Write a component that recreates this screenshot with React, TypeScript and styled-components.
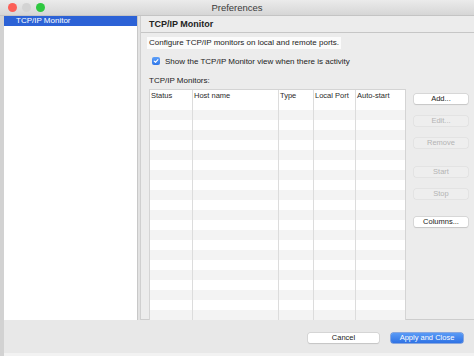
import React from "react";
import styled, { createGlobalStyle } from "styled-components";

const Global = createGlobalStyle`
  html, body { margin: 0; padding: 0; background: #e6e6e6; }
  body { font-family: "Liberation Sans", Arial, sans-serif; -webkit-font-smoothing: antialiased; }
  * { box-sizing: border-box; }
`;

const Window = styled.div`
  width: 474px;
  height: 356px;
  display: flex;
  flex-direction: column;
  background: #e8e8e8;
  overflow: hidden;
  color: #222;
`;

const TitleBar = styled.div`
  height: 16px;
  flex: none;
  display: flex;
  align-items: center;
  position: relative;
  background: linear-gradient(#ebebeb, #d6d6d6);
  border-bottom: 1px solid #c4c4c4;
`;

const Lights = styled.div`
  display: flex;
  gap: 5px;
  padding-left: 8px;
`;

const Light = styled.span<{ $c: string }>`
  width: 9px;
  height: 9px;
  border-radius: 50%;
  background: ${(p) => p.$c};
`;

const Title = styled.div`
  position: absolute;
  left: 0;
  right: 0;
  text-align: center;
  font-size: 9.5px;
  color: #3a3a3a;
  top: 2px;
`;

const Lower = styled.div`
  flex: 1;
  display: flex;
  flex-direction: column;
  border-left: 4px solid #d2d2d2;
`;

const Body = styled.div`
  height: 304px;
  display: flex;
  flex: none;
`;

const Sidebar = styled.div`
  width: 134px;
  background: #fff;
  border-right: 1px solid #c8c8c8;
  flex: none;
`;

const TreeItem = styled.div<{ $sel?: boolean }>`
  height: 10px;
  line-height: 10px;
  font-size: 8px;
  padding-left: 12px;
  color: ${(p) => (p.$sel ? "#fff" : "#222")};
  background: ${(p) => (p.$sel ? "#2c62d6" : "transparent")};
`;

const Gutter = styled.div`
  width: 3px;
  background: #e2e2e2;
  border-right: 1px solid #cfcfcf;
  flex: none;
`;

const Panel = styled.div`
  flex: 1;
  display: flex;
  flex-direction: column;
  background: #ececec;
  border-bottom: 1px solid #cdcdcd;
`;

const PanelHeader = styled.div`
  height: 17px;
  flex: none;
  display: flex;
  align-items: center;
  padding-left: 8px;
  font-size: 9px;
  font-weight: bold;
  color: #222;
  border-bottom: 1px solid #c6c6c6;
`;

const PanelBody = styled.div`
  flex: 1;
  display: flex;
  flex-direction: column;
  padding: 4px 7px 5px 6px;
`;

const Intro = styled.div`
  align-self: flex-start;
  height: 12px;
  line-height: 12px;
  padding: 0 2px;
  font-size: 8px;
  background: #fbfbfb;
`;

const CheckRow = styled.label`
  display: flex;
  align-items: center;
  gap: 5px;
  margin-top: 7px;
  padding-left: 5px;
  height: 10px;
  font-size: 8px;
`;

const Check = styled.span`
  width: 8px;
  height: 8px;
  border-radius: 2px;
  background: linear-gradient(#5ea0f8, #2f76e8);
  display: flex;
  align-items: center;
  justify-content: center;
`;

const SectionLabel = styled.div`
  margin-top: 10px;
  padding-left: 2px;
  height: 10px;
  line-height: 10px;
  font-size: 8px;
`;

const TableArea = styled.div`
  margin-top: 3px;
  flex: 1;
  display: flex;
  gap: 8px;
  padding-left: 2px;
`;

const Table = styled.div`
  width: 257px;
  display: grid;
  grid-template-columns: 43px 86px 35px 42px 1fr;
  grid-auto-rows: 10px;
  align-content: start;
  background: #fff;
  border: 1px solid #d4d4d4;
  overflow: hidden;
`;

const HeadCell = styled.div<{ $last?: boolean }>`
  height: 11px;
  line-height: 11px;
  font-size: 7.5px;
  padding-left: 1px;
  border-right: ${(p) => (p.$last ? "none" : "1px solid #dcdcdc")};
  border-bottom: 1px solid #dcdcdc;
  color: #2a2a2a;
`;

const Cell = styled.div<{ $alt: boolean; $last?: boolean }>`
  background: ${(p) => (p.$alt ? "#f3f3f3" : "#fff")};
  border-right: ${(p) => (p.$last ? "none" : "1px solid #dcdcdc")};
`;

const Buttons = styled.div`
  width: 54px;
  display: flex;
  flex-direction: column;
  padding-top: 5px;
`;

const Btn = styled.div<{ $disabled?: boolean; $gap: number }>`
  height: 10px;
  margin-top: ${(p) => p.$gap}px;
  font-size: 7.5px;
  line-height: 10px;
  text-align: center;
  border-radius: 2px;
  color: ${(p) => (p.$disabled ? "#b4b4b4" : "#222")};
  background: ${(p) => (p.$disabled ? "#eeeeee" : "#fff")};
  box-shadow: ${(p) =>
    p.$disabled ? "0 0 0 0.5px #dadada" : "0 0 0 0.5px #c6c6c6, 0 0.5px 1px rgba(0,0,0,0.15)"};
`;

const Footer = styled.div`
  flex: 1;
  display: flex;
  justify-content: flex-end;
  align-items: flex-start;
  gap: 12px;
  padding: 13px 11px 0 0;
  background: #e8e8e8;
  border-bottom: 3px solid #f2f2f2;
`;

const FootBtn = styled.div<{ $primary?: boolean }>`
  width: ${(p) => (p.$primary ? 72 : 71)}px;
  height: 10px;
  line-height: 10px;
  font-size: 7.5px;
  text-align: center;
  border-radius: 2px;
  color: ${(p) => (p.$primary ? "#fff" : "#222")};
  background: ${(p) => (p.$primary ? "linear-gradient(#5a9bf6, #2f72e4)" : "#fff")};
  box-shadow: ${(p) =>
    p.$primary ? "0 0 0 0.5px #2a67d4" : "0 0 0 0.5px #c6c6c6, 0 0.5px 1px rgba(0,0,0,0.15)"};
`;

const columns = ["Status", "Host name", "Type", "Local Port", "Auto-start"];
const rowCount = 22;

const buttons: { label: string; disabled?: boolean; gap: number }[] = [
  { label: "Add...", gap: 0 },
  { label: "Edit...", disabled: true, gap: 12 },
  { label: "Remove", disabled: true, gap: 12 },
  { label: "Start", disabled: true, gap: 19 },
  { label: "Stop", disabled: true, gap: 12 },
  { label: "Columns...", gap: 18 },
];

export default function App() {
  return (
    <>
      <Global />
      <Window>
        <TitleBar>
          <Lights>
            <Light $c="#fc5f57" />
            <Light $c="#d3d3d3" />
            <Light $c="#2ec840" />
          </Lights>
          <Title>Preferences</Title>
        </TitleBar>
        <Lower>
          <Body>
            <Sidebar>
              <TreeItem $sel>TCP/IP Monitor</TreeItem>
            </Sidebar>
            <Gutter />
            <Panel>
              <PanelHeader>TCP/IP Monitor</PanelHeader>
              <PanelBody>
                <Intro>Configure TCP/IP monitors on local and remote ports.</Intro>
                <CheckRow>
                  <Check>
                    <svg width="6" height="6" viewBox="0 0 10 10">
                      <path d="M2 5.2 L4.2 7.4 L8.2 2.6" fill="none" stroke="#fff" strokeWidth="1.8" strokeLinecap="round" strokeLinejoin="round" />
                    </svg>
                  </Check>
                  Show the TCP/IP Monitor view when there is activity
                </CheckRow>
                <SectionLabel>TCP/IP Monitors:</SectionLabel>
                <TableArea>
                  <Table>
                    {columns.map((c, i) => (
                      <HeadCell key={c} $last={i === columns.length - 1}>
                        {c}
                      </HeadCell>
                    ))}
                    {Array.from({ length: rowCount }).flatMap((_, r) =>
                      columns.map((c, i) => (
                        <Cell key={`${r}-${c}`} $alt={r % 2 === 1} $last={i === columns.length - 1} />
                      ))
                    )}
                  </Table>
                  <Buttons>
                    {buttons.map((b) => (
                      <Btn key={b.label} $disabled={b.disabled} $gap={b.gap}>
                        {b.label}
                      </Btn>
                    ))}
                  </Buttons>
                </TableArea>
              </PanelBody>
            </Panel>
          </Body>
          <Footer>
            <FootBtn>Cancel</FootBtn>
            <FootBtn $primary>Apply and Close</FootBtn>
          </Footer>
        </Lower>
      </Window>
    </>
  );
}
